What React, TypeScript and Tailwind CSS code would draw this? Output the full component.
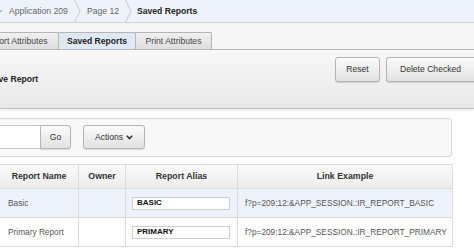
import React from "react";

function Chevron() {
  return (
    <svg width="7" height="22" viewBox="0 0 7 22" className="shrink-0">
      <polyline points="0.5,0 6,11 0.5,22" fill="none" stroke="#c3c8d0" strokeWidth="1" />
    </svg>
  );
}

function Btn({ children, className }: { children: React.ReactNode; className?: string }) {
  return (
    <div
      className={
        "flex items-center justify-center border border-[#b4b4b4] rounded-[3px] bg-gradient-to-b from-[#fbfbfb] to-[#e2e2e2] shadow-[0_1px_1px_rgba(0,0,0,0.12)] text-[#333] whitespace-nowrap " +
        (className ?? "")
      }
    >
      {children}
    </div>
  );
}

export default function App() {
  return (
    <div className="w-[474px] h-[248px] overflow-hidden bg-white font-['Liberation_Sans',Arial,sans-serif] text-[8.6px] text-[#444] leading-none">
      {/* Breadcrumb */}
      <div className="h-[23px] bg-[#eef3fb] border-b border-[#cfd3d9] flex items-stretch">
        <div className="w-[74px] flex items-center">
          <div className="w-[2px] h-[2px] bg-[#b8bec8]" />
          <span className="ml-[7px] text-[#666]">Application 209</span>
        </div>
        <Chevron />
        <div className="w-[44px] flex items-center pl-[6px] text-[#666]">Page 12</div>
        <Chevron />
        <div className="flex items-center pl-[5px] font-bold text-[#222]">Saved Reports</div>
      </div>

      {/* Tabs */}
      <div className="h-[27px] bg-[#f6f6f6] border-b border-[#b9b9b9] flex items-end whitespace-nowrap">
        <div className="-ml-[28px] w-[87px] h-[17px] border border-b-0 border-[#b5b5b5] rounded-t-[2px] bg-gradient-to-b from-[#f0f0f0] to-[#dedede] flex items-center justify-center text-[#444]">
          Report Attributes
        </div>
        <div className="-ml-px w-[78px] h-[17px] border border-b-0 border-[#b5b5b5] rounded-t-[2px] bg-[#dfe9f6] flex items-center justify-center font-bold text-[#222]">
          Saved Reports
        </div>
        <div className="-ml-px w-[77px] h-[17px] border border-b-0 border-[#b5b5b5] rounded-t-[2px] bg-gradient-to-b from-[#f0f0f0] to-[#dedede] flex items-center justify-center text-[#444]">
          Print Attributes
        </div>
      </div>

      {/* Save report region */}
      <div className="h-[59px] bg-gradient-to-b from-[#f8f8f8] to-[#e8e8e8] border-b border-[#bdbdbd] shadow-[0_2px_2px_rgba(0,0,0,0.06)] flex justify-between">
        <div className="self-center -ml-[12px] font-bold text-[#222] whitespace-nowrap">Save Report</div>
        <div className="flex gap-[6px] pt-[7px] self-start">
          <Btn className="w-[45px] h-[25px]">Reset</Btn>
          <Btn className="w-[88px] h-[25px] rounded-r-none border-r-0">Delete Checked</Btn>
        </div>
      </div>

      {/* Search toolbar */}
      <div className="mt-[9px] -ml-[4px] w-[456px] h-[39px] border border-[#d6d6d6] rounded-[3px] bg-[#f8f8f8] flex items-start pt-[6px]">
        <div className="w-[43px] h-[24px] bg-white border-y border-[#c8c8c8]" />
        <Btn className="w-[31px] h-[24px] rounded-l-none">Go</Btn>
        <Btn className="ml-[12px] w-[62px] h-[24px] gap-[3px]">
          <span>Actions</span>
          <svg width="7" height="5" viewBox="0 0 7 5">
            <polyline points="0.8,0.8 3.5,3.6 6.2,0.8" fill="none" stroke="#333" strokeWidth="1.6" />
          </svg>
        </Btn>
      </div>

      {/* Table */}
      <table className="mt-[7px] -ml-px border-collapse table-fixed w-[453px] whitespace-nowrap">
        <colgroup>
          <col className="w-[79px]" />
          <col className="w-[47px]" />
          <col className="w-[112px]" />
          <col className="w-[215px]" />
        </colgroup>
        <thead>
          <tr className="h-[24px] bg-gradient-to-b from-[#fbfbfb] to-[#ebebeb]">
            <th className="border border-[#dcdcdc] font-bold text-[#333] text-center text-[8.8px]">Report Name</th>
            <th className="border border-[#dcdcdc] font-bold text-[#333] text-center text-[8.8px]">Owner</th>
            <th className="border border-[#dcdcdc] font-bold text-[#333] text-center text-[8.8px]">Report Alias</th>
            <th className="border border-[#dcdcdc] font-bold text-[#333] text-center text-[8.8px]">Link Example</th>
          </tr>
        </thead>
        <tbody className="text-[8.3px]">
          <tr className="h-[29px] bg-[#eef3fb]">
            <td className="border border-[#dcdcdc] pl-[8px] text-[#555]">Basic</td>
            <td className="border border-[#dcdcdc]"></td>
            <td className="border border-[#dcdcdc] pl-[6px]">
              <div className="w-[98px] h-[13px] bg-white border border-[#cfcfcf] flex items-center pl-[4px] text-[8px] font-bold text-[#111]">
                BASIC
              </div>
            </td>
            <td className="border border-[#dcdcdc] pl-[7px] text-[#555]">f?p=209:12:&amp;APP_SESSION.:IR_REPORT_BASIC</td>
          </tr>
          <tr className="h-[29px] bg-white">
            <td className="border border-[#dcdcdc] pl-[8px] text-[#555]">Primary Report</td>
            <td className="border border-[#dcdcdc]"></td>
            <td className="border border-[#dcdcdc] pl-[6px]">
              <div className="w-[98px] h-[13px] bg-white border border-[#cfcfcf] flex items-center pl-[4px] text-[8px] font-bold text-[#111]">
                PRIMARY
              </div>
            </td>
            <td className="border border-[#dcdcdc] pl-[7px] text-[#555]">f?p=209:12:&amp;APP_SESSION.:IR_REPORT_PRIMARY</td>
          </tr>
        </tbody>
      </table>
    </div>
  );
}
